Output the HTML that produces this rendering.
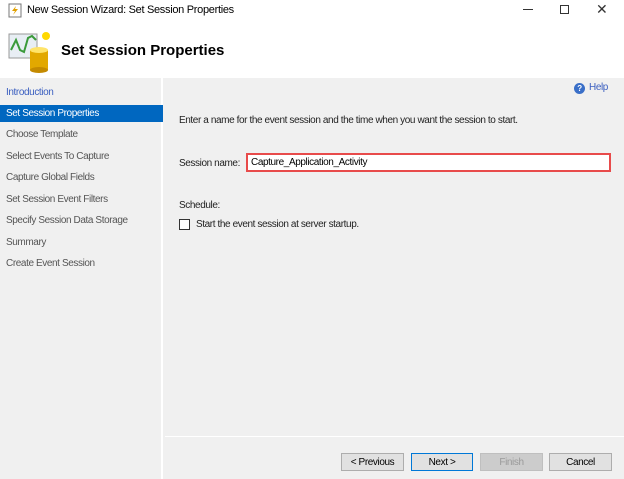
<!DOCTYPE html>
<html><head><style>
*{margin:0;padding:0;box-sizing:border-box}
body{width:624px;height:479px;background:#f0f0f0;font-family:"Liberation Sans",sans-serif;font-size:10px;letter-spacing:-0.4px;color:#222;position:relative;overflow:hidden}
.a{position:absolute}
.title{left:0;top:0;width:624px;height:22px;background:#fff}
.hdr{left:0;top:22px;width:624px;height:56px;background:#fff}
.left{left:0;top:78px;width:163px;height:401px;background:#f0f0f0;border-right:2px solid #fff}
.nav{position:absolute;left:6px;color:#555}
.btn{position:absolute;top:453px;height:18px;border:1px solid #adadad;background:#e1e1e1;text-align:center;line-height:17px;color:#000}
</style></head><body>
<div class="a title"></div>
<svg class="a" style="left:8px;top:3px" width="15" height="15"><rect x="1" y="1" width="12" height="13" fill="#fff" stroke="#777"/><path d="M8 3 L4 8 L7 8 L5 12 L10 6 L7 6 Z" fill="#e0a000"/></svg>
<div class="a" style="left:27px;top:4px;font-size:11px;color:#000;letter-spacing:-0.3px">New Session Wizard: Set Session Properties</div>
<div class="a" style="left:523px;top:9px;width:10px;height:1px;background:#333"></div>
<div class="a" style="left:560px;top:5px;width:9px;height:9px;border:1px solid #333"></div>
<div class="a" style="left:596px;top:1px;font-size:14px;color:#333">✕</div>
<div class="a hdr"></div>
<svg class="a" style="left:8px;top:28px" width="45" height="45">
<rect x="1" y="6" width="28" height="24" fill="#e8eef4" stroke="#999"/>
<path d="M3 22 L8 12 L12 22 L16 24 L20 10 L24 8 L28 12" fill="none" stroke="#3a9a3a" stroke-width="2"/>
<circle cx="38" cy="8" r="4" fill="#ffd800"/>
<rect x="22" y="22" width="18" height="20" fill="#e2a800"/>
<ellipse cx="31" cy="22" rx="9" ry="3" fill="#ffe46a"/>
<ellipse cx="31" cy="42" rx="9" ry="3" fill="#c48a00"/>
</svg>
<div class="a" style="left:61px;top:42px;font-size:15px;font-weight:bold;color:#000;letter-spacing:0">Set Session Properties</div>
<div class="a left"></div>
<div class="nav" style="top:87px;color:#3b5fc0">Introduction</div>
<div class="a" style="left:0;top:105px;width:163px;height:17px;background:#0067c0"></div>
<div class="nav" style="top:108px;color:#fff">Set Session Properties</div>
<div class="nav" style="top:129px">Choose Template</div>
<div class="nav" style="top:151px">Select Events To Capture</div>
<div class="nav" style="top:172px">Capture Global Fields</div>
<div class="nav" style="top:194px">Set Session Event Filters</div>
<div class="nav" style="top:215px">Specify Session Data Storage</div>
<div class="nav" style="top:237px">Summary</div>
<div class="nav" style="top:258px">Create Event Session</div>
<div class="a" style="left:574px;top:83px;width:11px;height:11px;border-radius:50%;background:#3a6fc8;color:#fff;font-size:8px;text-align:center;line-height:11px;font-weight:bold">?</div>
<div class="a" style="left:589px;top:82px;color:#3b5fc0">Help</div>
<div class="a" style="left:179px;top:115px">Enter a name for the event session and the time when you want the session to start.</div>
<div class="a" style="left:179px;top:158px">Session name:</div>
<div class="a" style="left:246px;top:153px;width:365px;height:19px;background:#fff;border:2px solid #e84b4b;padding:2px 3px;color:#000">Capture_Application_Activity</div>
<div class="a" style="left:179px;top:200px">Schedule:</div>
<div class="a" style="left:179px;top:219px;width:11px;height:11px;border:1px solid #333;background:#fff"></div>
<div class="a" style="left:196px;top:219px">Start the event session at server startup.</div>
<div class="a" style="left:165px;top:436px;width:459px;height:1px;background:#fff"></div>
<div class="btn" style="left:341px;width:63px">&lt; Previous</div>
<div class="btn" style="left:411px;width:62px;border:1px solid #0078d7">Next &gt;</div>
<div class="btn" style="left:480px;width:63px;background:#ccc;border-color:#bfbfbf;color:#9a9a9a">Finish</div>
<div class="btn" style="left:549px;width:63px">Cancel</div>
</body></html>
